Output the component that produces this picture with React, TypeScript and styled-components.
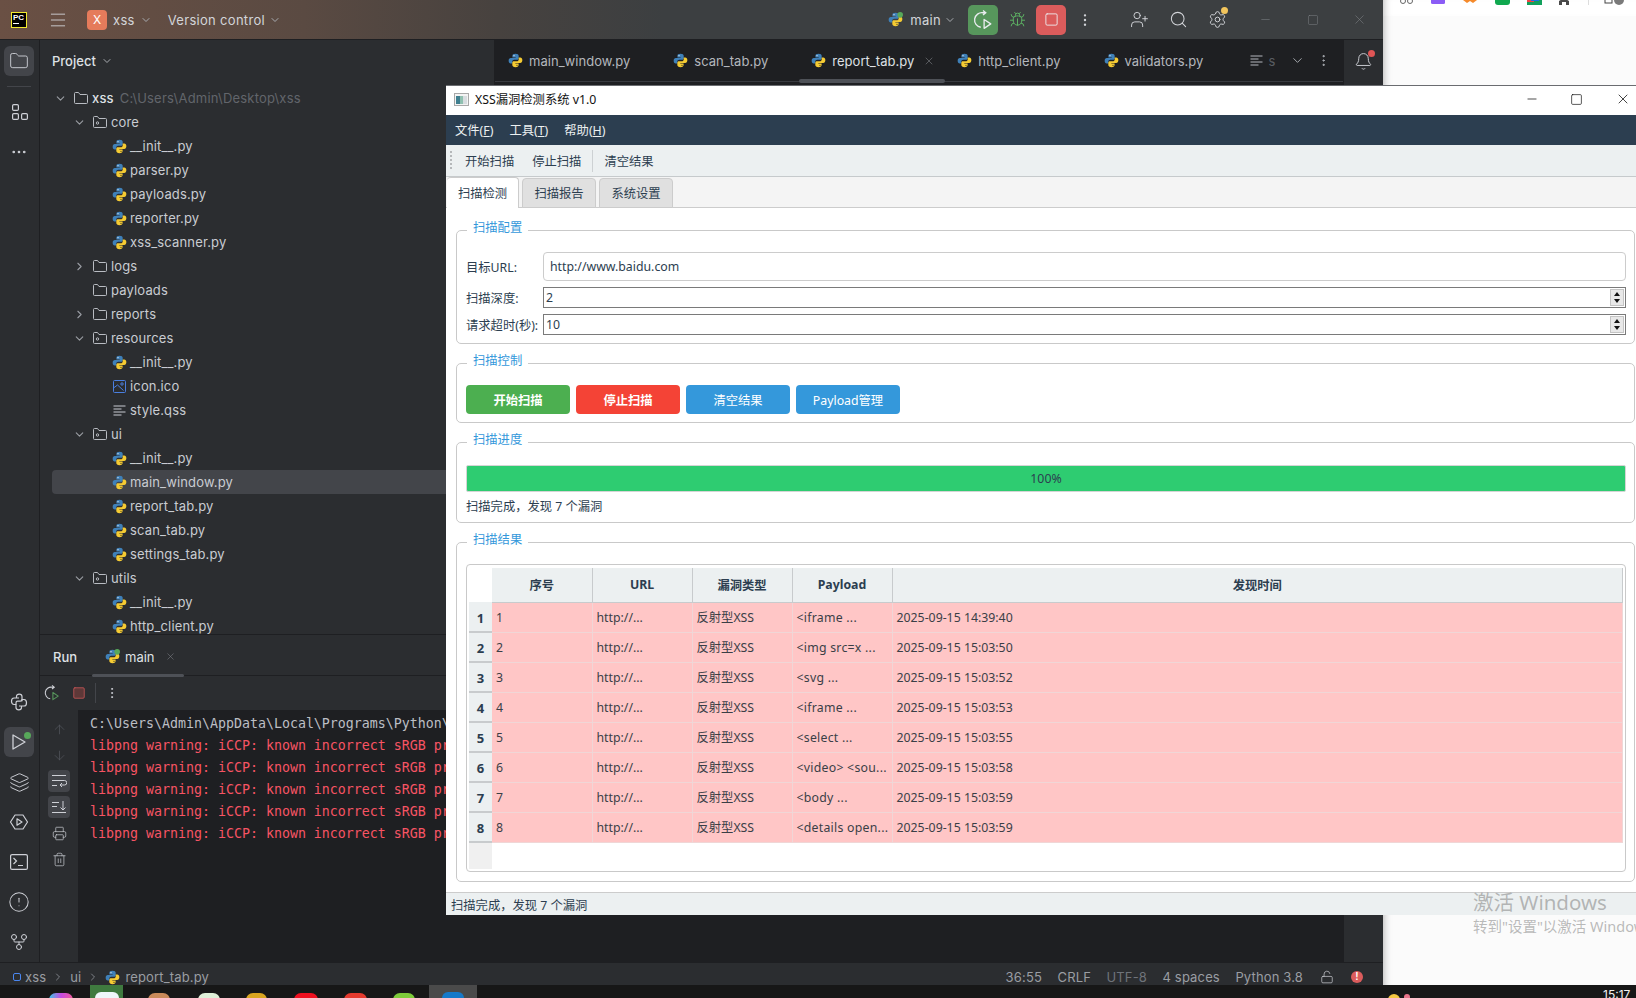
import React from 'react';
import styled, { createGlobalStyle } from 'styled-components';
import {
  ArrowDown, ArrowUp, Bell, Bug, ChevronDown, ChevronRight, CircleAlert, EllipsisVertical, Ellipsis, Folder, GitFork,
  Layers, LockOpen, Menu, Minus, Printer, Search, Settings, Square, Trash2, UserPlus, X,
} from 'lucide-react';

const Global = createGlobalStyle`
  html, body { margin: 0; padding: 0; width: 1636px; height: 998px; overflow: hidden; background: #171717; }
  * { box-sizing: border-box; }
`;

const IDE_FONT = `Inter, "Noto Sans", sans-serif`;
const QT_FONT = `"Noto Sans", "Noto Sans CJK SC", sans-serif`;

const Desktop = styled.div`
  position: relative; width: 1636px; height: 998px; display: grid; grid-template-rows: 985px 13px; overflow: hidden;
`;
const Upper = styled.div`display: flex; min-height: 0;`;
const Ide = styled.div`
  width: 1383px; flex: none; display: flex; flex-direction: column; background: #2b2d30; color: #c9ccd2;
  font: 13px ${IDE_FONT};
`;
const TitleBar = styled.header`
  height: 40px; flex: none; display: flex; align-items: center; border-bottom: 1px solid #1e1f22;
  background: linear-gradient(90deg, #6a5044 0%, #5a4a42 22%, #47423f 36%, #3c3f41 48%, #3c3f41 100%);
`;
const PcLogo = styled.div`
  width: 16px; height: 16px; margin-left: 11px; background: #000; border: 1px solid #f2ea2e; color: #fff;
  font: 700 8px/9px "Liberation Sans", sans-serif; padding-left: 1px; position: relative;
  &::after { content: ''; display: block; width: 6px; height: 1px; background: #fff; margin-top: 1px; }
`;
const HamburgerSlot = styled.div`margin-left: 21px; width: 20px; display: flex; color: #d5d7db;`;
const ProjectTile = styled.div`
  width: 20px; height: 20px; margin-left: 19px; border-radius: 4px; background: #e57b5b; color: #fff;
  display: flex; align-items: center; justify-content: center; font-size: 12px;
`;
const TitleText = styled.span<{ $ml: number }>`margin-left: ${p => p.$ml}px; color: #d3d5d9; font-size: 13px; letter-spacing: .3px; white-space: nowrap;`;
const ChevSlot = styled.span<{ $ml?: number }>`margin-left: ${p => p.$ml ?? 5}px; display: flex; color: #a8abb0;`;
const TitleRight = styled.div`margin-left: auto; display: flex; align-items: center;`;
const ActionTile = styled.div<{ $bg: string; $ml: number }>`
  width: 30px; height: 30px; margin-left: ${p => p.$ml}px; border-radius: 5px; background: ${p => p.$bg};
  color: #eef0f2; display: flex; align-items: center; justify-content: center;
`;
const TitleIcon = styled.div<{ $w: number; $ml?: number; $c?: string }>`
  width: ${p => p.$w}px; margin-left: ${p => p.$ml ?? 0}px; color: ${p => p.$c ?? '#d3d5d9'};
  display: flex; align-items: center; justify-content: center; position: relative;
`;
const Dot = styled.i<{ $c: string; $s?: number; $r?: number; $t?: number }>`
  position: absolute; width: ${p => p.$s ?? 7}px; height: ${p => p.$s ?? 7}px; border-radius: 50%; background: ${p => p.$c};
  right: ${p => p.$r ?? 0}px; top: ${p => p.$t ?? 0}px;
`;

const Main = styled.div`flex: 1; min-height: 0; display: flex;`;
const LeftStrip = styled.nav`
  width: 40px; flex: none; border-right: 1px solid #1e1f22; display: flex; flex-direction: column; align-items: center;
  padding: 6px 1px 5px 0;
`;
const StripBtn = styled.div<{ $on?: boolean }>`
  width: 30px; height: 30px; flex: none; border-radius: 6px; position: relative; color: #ced0d6;
  background: ${p => (p.$on ? '#43454a' : 'transparent')}; display: flex; align-items: center; justify-content: center;
`;
const StripRule = styled.div`width: 24px; height: 1px; background: #43454a; margin: 10px 0;`;
const StripGroup = styled.div<{ $bottom?: boolean }>`
  display: flex; flex-direction: column; gap: 10px; ${p => (p.$bottom ? 'margin-top: auto;' : '')}
`;
const Center = styled.div`flex: 1; min-width: 0; display: flex; flex-direction: column;`;
const TopSplit = styled.div`height: 595px; flex: none; display: flex; border-bottom: 1px solid #1e1f22;`;
const ProjectPanel = styled.section`width: 455px; flex: none; overflow: hidden; border-right: 1px solid #1e1f22;`;
const PanelHead = styled.div`height: 46px; padding: 0 12px 4px; display: flex; align-items: center; font-weight: 500; color: #dfe1e5;`;
const Tree = styled.div`padding-left: 12px;`;
const TreeRow = styled.div<{ $d: number; $sel?: boolean }>`
  height: 24px; display: flex; align-items: center; padding-left: ${p => p.$d * 19}px; white-space: nowrap;
  background: ${p => (p.$sel ? '#43454a' : 'transparent')}; border-radius: 4px 0 0 4px; letter-spacing: .15px; color: #c9ccd2;
`;
const Arrow = styled.span`width: 16px; flex: none; display: flex; justify-content: center; color: #9a9da3;`;
const TreeIcon = styled.span`width: 14px; margin: 0 4px 0 6px; flex: none; display: flex; align-items: center; justify-content: center;`;
const PathHint = styled.span`margin-left: 6px; color: #62656b; letter-spacing: .2px;`;
const Bold = styled.span`font-weight: 500; color: #dfe1e5;`;

const EditorArea = styled.section`flex: 1; min-width: 0; background: #1e1f22;`;
const TabStrip = styled.div`height: 42px; display: flex; align-items: center; border-bottom: 1px solid #393b40; padding-left: 1px;`;
const EdTab = styled.div<{ $on?: boolean }>`
  height: 42px; padding: 0 31px 0 12px; display: flex; align-items: center; gap: 6px; position: relative; white-space: nowrap;
  letter-spacing: .03px; color: ${p => (p.$on ? '#dfe1e5' : '#b4b7bd')};
  ${p => (p.$on ? `&::after { content: ''; position: absolute; left: 0; right: 0; bottom: -1px; height: 4px; border-radius: 2px; background: #4e5157; }` : '')}
`;
const TabClose = styled.span`position: absolute; right: 10px; display: flex; color: #7e8187;`;
const TabTools = styled.div`margin-left: auto; display: flex; align-items: center; color: #b4b7bd;`;
const TabTool = styled.span<{ $w: number }>`width: ${p => p.$w}px; display: flex; justify-content: center;`;
const DimS = styled.span`color: #5a5d63;`;
const RightStrip = styled.aside`
  width: 40px; flex: none; border-left: 1px solid #1e1f22; display: flex; justify-content: center; padding-top: 12px; position: relative; color: #ced0d6;
`;
const BellWrap = styled.div`position: relative; height: 20px; display: flex;`;

const RunPanel = styled.section`flex: 1; min-height: 0; display: flex; flex-direction: column;`;
const RunHead = styled.div`height: 41px; flex: none; display: flex; align-items: center; border-bottom: 1px solid #1e1f22; padding: 3px 0 0 13px;`;
const RunTitle = styled.span`font-weight: 500; color: #dfe1e5; width: 39px;`;
const RunTab = styled.div`
  height: 38px; width: 92px; padding-left: 13px; display: flex; align-items: center; gap: 5px; position: relative; color: #dfe1e5;
  &::after { content: ''; position: absolute; left: 0; right: 0; bottom: -1px; height: 3px; border-radius: 2px; background: #4e5157; }
`;
const RunClose = styled.span`margin-left: 5px; display: flex; color: #7e8187;`;
const RunTools = styled.div`height: 34px; flex: none; display: flex; align-items: center; padding-left: 4px; color: #ced0d6;`;
const RunTool = styled.span<{ $w: number; $c?: string; $ml?: number }>`
  width: ${p => p.$w}px; margin-left: ${p => p.$ml ?? 0}px; display: flex; justify-content: center; color: ${p => p.$c ?? 'inherit'};
`;
const RunRule = styled.span`width: 1px; height: 20px; background: #43454a; margin: 0 8px 0 5px;`;
const RunBody = styled.div`flex: 1; min-height: 0; display: flex;`;
const Gutter = styled.div`width: 38px; flex: none; display: flex; flex-direction: column; align-items: center; gap: 4px; padding-top: 8px;`;
const GutterBtn = styled.div<{ $on?: boolean; $dim?: boolean }>`
  width: 22px; height: 22px; border-radius: 4px; display: flex; align-items: center; justify-content: center;
  background: ${p => (p.$on ? '#43454a' : 'transparent')}; color: ${p => (p.$dim ? '#55585e' : '#ced0d6')};
`;
const Console = styled.pre`
  flex: 1; margin: 0; background: #1e1f22; padding: 3px 0 0 12px; overflow: hidden;
  font: 13.3px/22px "DejaVu Sans Mono", monospace; letter-spacing: -.01px; color: #bcbec4;
`;
const ConsoleLine = styled.div<{ $err?: boolean }>`
  white-space: pre; height: 22px; color: ${p => (p.$err ? '#f75464' : '#bcbec4')};
`;

const StatusBar = styled.footer`
  height: 23px; flex: none; display: flex; align-items: center; border-top: 1px solid #1e1f22; padding: 6px 20px 0 13px; color: #9a9da3; letter-spacing: .15px;
`;
const Crumb = styled.span`display: flex; align-items: center; gap: 5px;`;
const CrumbSep = styled.span<{ $mx: number }>`display: flex; margin: 0 ${p => p.$mx}px; color: #7e8187;`;
const ModuleDot = styled.i`width: 8px; height: 8px; border: 1px solid #4a86f0; border-radius: 2px; margin-right: -1px;`;
const StatusRight = styled.div`margin-left: auto; display: flex; align-items: center; gap: 15.5px;`;
const Dim = styled.span`color: #6f737a;`;
const LockSlot = styled.span`margin-left: 1px; display: flex; color: #ced0d6;`;
const ErrBadge = styled.span`
  width: 12px; height: 12px; border-radius: 50%; background: #db5c5c; color: #fff; font: 700 10px/12px "Liberation Sans", sans-serif; text-align: center; margin-left: 2px;
`;

const RightPane = styled.div`
  flex: 1; background: #fbfbfb; box-shadow: inset 8px 0 8px -8px rgba(0,0,0,.35); display: flex; flex-direction: column;
`;
const BrowserStrip = styled.div`height: 16px; background: #fff; overflow: hidden; box-shadow: inset 8px 0 8px -8px rgba(0,0,0,.35);`;

const Taskbar = styled.div`background: #171717; display: flex; padding-left: 49px; overflow: hidden;`;
const TaskIcon = styled.i<{ $w: number; $ml: number; $c: string }>`
  width: ${p => p.$w}px; height: 20px; margin: 8px 0 0 ${p => p.$ml}px; border-radius: 7px 7px 0 0; background: ${p => p.$c}; flex: none;
`;
const TaskTile = styled.div<{ $w: number; $ml: number; $c: string }>`
  width: ${p => p.$w}px; margin-left: ${p => p.$ml}px; background: ${p => p.$c}; flex: none; display: flex; justify-content: center; padding-top: 7px;
`;
const TileBlob = styled.i<{ $w: number; $c: string }>`width: ${p => p.$w}px; height: 14px; background: ${p => p.$c}; border-radius: 6px 6px 0 0;`;
const Clock = styled.span`margin-left: auto; color: #f2f2f2; font: 12px/13px ${IDE_FONT}; padding-top: 3px; width: 33px; white-space: nowrap;`;
const TrayDot = styled.i<{ $c: string; $ml: number; $w: number }>`
  width: ${p => p.$w}px; height: ${p => p.$w}px; margin: 9px 0 0 ${p => p.$ml}px; border-radius: 50%; background: ${p => p.$c}; flex: none;
`;

/* ---------- Qt window ---------- */
const QtWindow = styled.div`
  position: absolute; left: 446px; top: 85px; width: 1190px; height: 830px; background: #fff; display: flex; flex-direction: column;
  font: 12.3px ${QT_FONT}; color: #2c3e50; border-top: 1px solid #6a6c70; overflow: hidden;
`;
const QtTitle = styled.div`height: 29px; flex: none; display: flex; align-items: center; padding: 0 0 3px 8px; color: #111; white-space: nowrap;`;
const QtTitleText = styled.span`margin-left: 6px;`;
const WinBtns = styled.div`margin-left: auto; display: flex; align-items: center; color: #000;`;
const WinBtn = styled.span<{ $w: number; $ml?: number }>`width: ${p => p.$w}px; margin-left: ${p => p.$ml ?? 0}px; display: flex; justify-content: center;`;
const MenuBar = styled.div`height: 30px; flex: none; background: #2c3e50; color: #ecf0f1; display: flex; align-items: center; padding: 0 0 1px 9px; gap: 16px;`;
const ToolBar = styled.div`
  height: 32px; flex: none; background: #ecf0f1; border-bottom: 1px solid #c6cacc; display: flex; align-items: center; padding: 1px 0 0 4px; color: #2c3e50;
`;
const Grip = styled.i`width: 2px; height: 20px; margin-right: 13px; background: repeating-linear-gradient(180deg, #b5b8ba 0 2px, transparent 2px 4px);`;
const ToolItem = styled.span`margin-right: 18px; white-space: nowrap;`;
const ToolSep = styled.i`width: 1px; height: 22px; background: #cdd1d3; margin: 0 11px 0 -7px;`;
const TabBar = styled.div`height: 31px; flex: none; background: #f4f4f4; border-bottom: 1px solid #ccc; display: flex; padding-left: 1px; gap: 3px;`;
const QtTab = styled.div<{ $on?: boolean }>`
  width: ${p => (p.$on ? 72 : 74)}px; height: ${p => (p.$on ? 31 : 30)}px; margin-top: ${p => (p.$on ? 0 : 1)}px;
  background: ${p => (p.$on ? '#fff' : '#e0e0e0')}; border: 1px solid #ccc; border-bottom: ${p => (p.$on ? 'none' : '1px solid #ccc')};
  border-radius: 4px 4px 0 0; display: flex; align-items: center; justify-content: center;
  ${p => (p.$on ? 'border-left: none; position: relative; z-index: 1;' : '')}
`;
const QtBody = styled.div`flex: 1; min-height: 0; padding: 22px 1px 0 10px; display: flex; flex-direction: column; gap: 19px;`;
const Group = styled.section<{ $h: number }>`
  position: relative; height: ${p => p.$h}px; flex: none; border: 1px solid #c9c9c9; border-radius: 5px; padding: 0 8px 0 9px;
`;
const Legend = styled.span`
  position: absolute; left: 10px; top: -12px; padding: 0 6px; background: #fff; color: #3498db; line-height: 18px; white-space: nowrap;
`;
const FormGrid = styled.div`padding-top: 21px; display: grid; grid-template-columns: 77px 1fr; row-gap: 6px; align-items: center;`;
const FormLabel = styled.label`white-space: nowrap; color: #2c3e50;`;
const UrlInput = styled.div`height: 29px; border: 1px solid #ccc; border-radius: 4px; padding-left: 6px; display: flex; align-items: center;`;
const SpinBox = styled.div`height: 21px; border: 1px solid #7a7a7a; display: flex; align-items: center; padding: 0 1px 0 2px; justify-content: space-between;`;
const SpinBtns = styled.div`width: 14px; height: 17px; border: 1px solid #c4c4c4; background: #e8e8e8; display: flex; flex-direction: column; align-items: center; justify-content: space-around;`;
const TriUp = styled.i`width: 0; height: 0; border: 3px solid transparent; border-top: 0; border-bottom: 4px solid #111;`;
const TriDown = styled.i`width: 0; height: 0; border: 3px solid transparent; border-bottom: 0; border-top: 4px solid #111;`;
const BtnRow = styled.div`padding-top: 21px; display: flex; gap: 6px;`;
const QtButton = styled.button<{ $bg: string; $bold?: boolean }>`
  width: 104px; height: 29px; border: none; border-radius: 4px; background: ${p => p.$bg}; color: #fff; padding: 0;
  font: ${p => (p.$bold ? 600 : 400)} 12.3px ${QT_FONT};
`;
const ProgressTrack = styled.div`margin-top: 22px; height: 27px; border: 1px solid #d5d5d5; border-radius: 2px; background: #2ecc71; display: flex; align-items: center; justify-content: center; color: #2c3e50;`;
const ProgressNote = styled.div`margin-top: 6px; line-height: 18px; color: #2c3e50;`;
const TableFrame = styled.div`margin-top: 21px; height: 308px; border: 1px solid #c9c9c9; border-radius: 4px; padding: 3px 2px 2px 2px; display: flex; flex-direction: column;`;
const ResultTable = styled.table`border-collapse: collapse; table-layout: fixed; width: 1154px; color: #2c3e50;`;
const Th = styled.th`
  height: 34px; padding: 0; background: #ecf0f1; border-right: 1px solid #c8cbcd; border-bottom: 1px solid #c8cbcd; font-weight: 700; color: #2c3e50; font-size: 12.3px;
`;
const CornerTh = styled.th`background: #fff; padding: 0;`;
const RowHead = styled.th`
  height: 30px; padding: 2px 0 0; background: #ecf0f1; border-bottom: 2px solid #c8cbcd; font-weight: 700; font-size: 13px; color: #2c3e50; text-align: center;
`;
const Td = styled.td<{ $wide?: boolean }>`
  height: 30px; padding: 0 4px; background: #ffc6c6; border-right: 1px solid #f0d6d6; border-bottom: 1px solid #f0d6d6; white-space: nowrap; overflow: hidden; color: #3a3f46;
  letter-spacing: ${p => (p.$wide ? '.25px' : '0')};
`;
const TableFiller = styled.div`width: 23px; flex: 1; background: #f0f0f0;`;
const QtStatus = styled.div`height: 23px; flex: none; margin-top: 11px; background: #ecf0f1; border-top: 1px solid #ccc; padding: 1px 0 0 5px; display: flex; align-items: center; color: #2c3e50;`;
const Watermark = styled.div`position: absolute; left: 1473px; top: 888px; color: rgba(120,120,120,.5); font-family: ${QT_FONT}; white-space: nowrap; pointer-events: none;`;
const WmBig = styled.div`font-size: 20.5px; line-height: 28px;`;
const WmSmall = styled.div`font-size: 14.5px; line-height: 18px; margin-top: 1px;`;

/* ---------- drawn icons ---------- */
const Py = ({ s = 15, dot = false }: { s?: number; dot?: boolean }) => (
  <svg width={s} height={s} viewBox="0 0 16 16" style={{ flex: 'none' }}>
    <path fill="#3f80b8" d="M8 .8C5.5.8 4.7 1.8 4.7 3.1v1.7h3.5v.6H3C1.7 5.4.7 6.4.7 8.2s1 2.9 2.2 2.9h1.7V9.2c0-1.2.9-2 2-2h3.1c1 0 1.7-.7 1.7-1.6V3.1C11.4 1.8 10.3.8 8 .8Z" />
    <path fill="#f5cb33" transform="rotate(180 8 8)" d="M8 .8C5.5.8 4.7 1.8 4.7 3.1v1.7h3.5v.6H3C1.7 5.4.7 6.4.7 8.2s1 2.9 2.2 2.9h1.7V9.2c0-1.2.9-2 2-2h3.1c1 0 1.7-.7 1.7-1.6V3.1C11.4 1.8 10.3.8 8 .8Z" />
    <circle cx="6.4" cy="2.8" r=".7" fill="#dfe6ee" />
    <circle cx="9.6" cy="13.2" r=".7" fill="#5c5226" />
    {dot && <circle cx="13" cy="3" r="3" fill="#57a85a" />}
  </svg>
);
const ModFolder = () => (
  <svg width="14" height="14" viewBox="0 0 14 14" fill="none" stroke="#b9bcc2">
    <path d="M.5 2.5a1 1 0 0 1 1-1h3l1.5 2h6.5a1 1 0 0 1 1 1v7a1 1 0 0 1-1 1h-11a1 1 0 0 1-1-1z" />
    <circle cx="4.5" cy="8" r="1.2" />
  </svg>
);
const PlainFolder = () => (
  <svg width="14" height="14" viewBox="0 0 14 14" fill="none" stroke="#b9bcc2">
    <path d="M.5 2.5a1 1 0 0 1 1-1h3l1.5 2h6.5a1 1 0 0 1 1 1v7a1 1 0 0 1-1 1h-11a1 1 0 0 1-1-1z" />
  </svg>
);
const IcoFile = () => (
  <svg width="13" height="13" viewBox="0 0 13 13" fill="none" stroke="#4a7fe0">
    <rect x=".5" y=".5" width="12" height="12" rx="1" />
    <path d="M.5 8 4.5 5l6 5.5" /><circle cx="9" cy="4" r="1.2" />
  </svg>
);
const TextLines = ({ s = 13 }: { s?: number }) => (
  <svg width={s} height={s} viewBox="0 0 13 13" fill="none" stroke="currentColor">
    <path d="M.5 2h12M.5 5h8M.5 8h12M.5 11h8" />
  </svg>
);
const Structure = () => (
  <svg width="18" height="18" viewBox="0 0 18 18" fill="none" stroke="currentColor" strokeWidth="1.2">
    <rect x="2.6" y="1.6" width="5.8" height="5.8" rx="1.2" /><rect x="2.6" y="10.6" width="5.8" height="5.8" rx="1.2" /><rect x="11.6" y="10.6" width="5.8" height="5.8" rx="1.2" />
  </svg>
);
const PyOutline = () => (
  <svg width="18" height="18" viewBox="0 0 18 18" fill="none" stroke="currentColor" strokeWidth="1.2">
    <path d="M6.5 5V3.5C6.5 2 7.5 1.2 9.2 1.2s2.8.8 2.8 2.3v3c0 1-.8 1.7-1.7 1.7H7.6C6.6 8.2 6 9 6 10v1.5H4C2.6 11.500 1.500 10.500 1.500 8.300S2.600 5 4 5h5" />
    <path d="M11.500 13v1.500c0 1.500-1 2.300-2.700 2.300S6 16 6 14.500v-3M12 8.200V6.500h2c1.400 0 2.500 1 2.500 3.200S15.400 13 14 13H9" />
  </svg>
);
const RunPlay = () => (
  <svg width="20" height="20" viewBox="0 0 20 20" fill="none" stroke="currentColor" strokeWidth="1.3">
    <path d="M4 3v14l12-7z" strokeLinejoin="round" />
  </svg>
);
const Services = () => (
  <svg width="20" height="20" viewBox="0 0 20 20" fill="none" stroke="currentColor" strokeWidth="1.2">
    <path d="M6 3h8l4.500 7-4.500 7H6l-4.500-7z" strokeLinejoin="round" /><path d="M8 6.800v6.400l5-3.200z" strokeLinejoin="round" />
  </svg>
);
const Term = () => (
  <svg width="18" height="18" viewBox="0 0 18 18" fill="none" stroke="currentColor" strokeWidth="1.2">
    <rect x=".6" y="1.600" width="16.800" height="14.800" rx="1.500" /><path d="m3.500 5 3 3-3 3M8 12.500h5" />
  </svg>
);
const Rerun = ({ c = '#e9ecef', play = '#e9ecef', s = 20 }: { c?: string; play?: string; s?: number }) => (
  <svg width={s} height={s} viewBox="0 0 18 18" fill="none" strokeWidth="1.2">
    <path stroke={c} d="M7 15.500A6.500 6.500 0 0 1 9 2.500h2M9 .5l2.500 2-2.500 2" />
    <path stroke={play} d="M10 8.500v8l6-4z" strokeLinejoin="round" />
  </svg>
);
const SoftWrap = () => (
  <svg width="16" height="16" viewBox="0 0 16 16" fill="none" stroke="currentColor"><path d="M1 2.500h14M1 7.500h12.500a1.800 1.800 0 0 1 0 4.500H9m2-2-2 2 2 2M1 12.500h5" /></svg>
);
const ScrollEnd = () => (
  <svg width="16" height="16" viewBox="0 0 16 16" fill="none" stroke="currentColor"><path d="M1 3.500h7M1 7.500h5M1 13.500h14M12 2v9m-2.500-2.500 2.500 2.500 2.500-2.500" /></svg>
);
const BrowserTops = () => (
  <svg width="253" height="6" viewBox="0 0 253 6" style={{ display: 'block' }}>
    <circle cx="20" cy="1" r="2.500" fill="none" stroke="#666" /><circle cx="27" cy="1" r="2.500" fill="none" stroke="#666" />
    <rect x="48" y="-3" width="14" height="7" rx="1.500" fill="#8b5cf6" />
    <path d="M80 -1h14v1l-4 3-3-2-3 2-4-3z" fill="#f58a2b" />
    <rect x="112" y="-3" width="15" height="8" rx="3" fill="#10a84f" />
    <rect x="144" y="-2" width="15" height="7" fill="#12a05c" /><rect x="144" y="-2" width="7" height="4" fill="#e44" /><rect x="148" y="-2" width="8" height="3" fill="#1b6fe0" />
    <path d="M176 5V1l5-3 5 3v4h-3V2h-4v3z" fill="#4a4a4a" />
    <rect x="205" y="-2" width="1" height="7" fill="#ddd" />
    <circle cx="236" cy="0" r="5" fill="#7a7a7a" /><rect x="222" y="-2" width="7" height="5" fill="none" stroke="#444" />
  </svg>
);

const files: { d: number; t: string; k: string; open?: boolean; hint?: string; sel?: boolean }[] = [
  { d: 0, t: 'xss', k: 'root', open: true, hint: 'C:\\Users\\Admin\\Desktop\\xss' },
  { d: 1, t: 'core', k: 'mod', open: true },
  { d: 2, t: '__init__.py', k: 'py' }, { d: 2, t: 'parser.py', k: 'py' }, { d: 2, t: 'payloads.py', k: 'py' },
  { d: 2, t: 'reporter.py', k: 'py' }, { d: 2, t: 'xss_scanner.py', k: 'py' },
  { d: 1, t: 'logs', k: 'dir', open: false }, { d: 1, t: 'payloads', k: 'dir' }, { d: 1, t: 'reports', k: 'dir', open: false },
  { d: 1, t: 'resources', k: 'mod', open: true },
  { d: 2, t: '__init__.py', k: 'py' }, { d: 2, t: 'icon.ico', k: 'ico' }, { d: 2, t: 'style.qss', k: 'txt' },
  { d: 1, t: 'ui', k: 'mod', open: true },
  { d: 2, t: '__init__.py', k: 'py' }, { d: 2, t: 'main_window.py', k: 'py', sel: true }, { d: 2, t: 'report_tab.py', k: 'py' },
  { d: 2, t: 'scan_tab.py', k: 'py' }, { d: 2, t: 'settings_tab.py', k: 'py' },
  { d: 1, t: 'utils', k: 'mod', open: true },
  { d: 2, t: '__init__.py', k: 'py' }, { d: 2, t: 'http_client.py', k: 'py' },
];

const rows = [
  ['<iframe ...', '2025-09-15 14:39:40'],
  ['<img src=x ...', '2025-09-15 15:03:50'],
  ['<svg ...', '2025-09-15 15:03:52'],
  ['<iframe ...', '2025-09-15 15:03:53'],
  ['<select ...', '2025-09-15 15:03:55'],
  ['<video> <sou...', '2025-09-15 15:03:58'],
  ['<body ...', '2025-09-15 15:03:59'],
  ['<details open...', '2025-09-15 15:03:59'],
];

const kindIcon = (k: string) => {
  if (k === 'py') return <Py />;
  if (k === 'ico') return <IcoFile />;
  if (k === 'txt') return <TextLines />;
  if (k === 'mod') return <ModFolder />;
  return <PlainFolder />;
};

const Mnemonic = ({ t, k }: { t: string; k: string }) => <span>{t}(<u>{k}</u>)</span>;

export default function App() {
  return (
    <Desktop>
      <Global />
      <Upper>
        <Ide>
          <TitleBar>
            <PcLogo>PC</PcLogo>
            <HamburgerSlot><Menu size={20} strokeWidth={1.05} /></HamburgerSlot>
            <ProjectTile>X</ProjectTile>
            <TitleText $ml={6}>xss</TitleText>
            <ChevSlot $ml={5}><ChevronDown size={12} /></ChevSlot>
            <TitleText $ml={16}>Version control</TitleText>
            <ChevSlot $ml={4}><ChevronDown size={12} /></ChevSlot>
            <TitleRight>
              <Py dot />
              <TitleText $ml={7}>main</TitleText>
              <ChevSlot $ml={3}><ChevronDown size={12} /></ChevSlot>
              <ActionTile $bg="#57965c" $ml={12}><Rerun /></ActionTile>
              <TitleIcon $w={28} $ml={5} $c="#5fb865"><Bug size={17} strokeWidth={1.3} /></TitleIcon>
              <ActionTile $bg="#db5c5c" $ml={5}><Square size={15} strokeWidth={1.4} /></ActionTile>
              <TitleIcon $w={28} $ml={5}><EllipsisVertical size={16} strokeWidth={1.6} /></TitleIcon>
              <TitleIcon $w={40} $ml={20}><UserPlus size={19} strokeWidth={1.2} /></TitleIcon>
              <TitleIcon $w={38}><Search size={19} strokeWidth={1.3} /></TitleIcon>
              <TitleIcon $w={40}><Settings size={19} strokeWidth={1.2} /><Dot $c="#f2c55c" $s={7} $r={9} $t={-3} /></TitleIcon>
              <TitleIcon $w={47} $ml={5} $c="#7f8286"><Minus size={13} strokeWidth={1} /></TitleIcon>
              <TitleIcon $w={47} $c="#7f8286"><Square size={12} strokeWidth={1} /></TitleIcon>
              <TitleIcon $w={47} $c="#7f8286"><X size={15} strokeWidth={.9} /></TitleIcon>
            </TitleRight>
          </TitleBar>
          <Main>
            <LeftStrip>
              <StripBtn $on><Folder size={20} strokeWidth={1.1} /></StripBtn>
              <StripRule />
              <StripGroup>
                <StripBtn><Structure /></StripBtn>
                <StripBtn><Ellipsis size={18} strokeWidth={1.6} /></StripBtn>
              </StripGroup>
              <StripGroup $bottom>
                <StripBtn><PyOutline /></StripBtn>
                <StripBtn $on><RunPlay /><Dot $c="#57a85a" $s={7} $r={3} $t={5} /></StripBtn>
                <StripBtn><Layers size={21} strokeWidth={1.1} /></StripBtn>
                <StripBtn><Services /></StripBtn>
                <StripBtn><Term /></StripBtn>
                <StripBtn><CircleAlert size={22} strokeWidth={1.1} /></StripBtn>
                <StripBtn><GitFork size={20} strokeWidth={1.2} /></StripBtn>
              </StripGroup>
            </LeftStrip>
            <Center>
              <TopSplit>
                <ProjectPanel>
                  <PanelHead>Project<ChevSlot><ChevronDown size={12} /></ChevSlot></PanelHead>
                  <Tree>
                    {files.map((f, i) => (
                      <TreeRow key={i} $d={f.d} $sel={f.sel}>
                        <Arrow>
                          {f.open === true && <ChevronDown size={13} />}
                          {f.open === false && <ChevronRight size={13} />}
                        </Arrow>
                        <TreeIcon>{kindIcon(f.k)}</TreeIcon>
                        {f.k === 'root' ? <Bold>{f.t}</Bold> : f.t}
                        {f.hint && <PathHint>{f.hint}</PathHint>}
                      </TreeRow>
                    ))}
                  </Tree>
                </ProjectPanel>
                <EditorArea>
                  <TabStrip>
                    <EdTab><Py />main_window.py</EdTab>
                    <EdTab><Py />scan_tab.py</EdTab>
                    <EdTab $on><Py />report_tab.py<TabClose><X size={12} strokeWidth={1.2} /></TabClose></EdTab>
                    <EdTab><Py />http_client.py</EdTab>
                    <EdTab><Py />validators.py</EdTab>
                    <TabTools>
                      <TabTool $w={16}><TextLines /></TabTool>
                      <TabTool $w={16}><DimS>s</DimS></TabTool>
                      <TabTool $w={34}><ChevronDown size={15} strokeWidth={1.4} /></TabTool>
                      <TabTool $w={18}><EllipsisVertical size={15} strokeWidth={1.6} /></TabTool>
                      <TabTool $w={11} />
                    </TabTools>
                  </TabStrip>
                </EditorArea>
              </TopSplit>
              <RunPanel>
                <RunHead>
                  <RunTitle>Run</RunTitle>
                  <RunTab><Py dot />main<RunClose><X size={11} strokeWidth={1.2} /></RunClose></RunTab>
                </RunHead>
                <RunTools>
                  <RunTool $w={16}><Rerun c="#ced0d6" play="#57965c" s={16} /></RunTool>
                  <RunTool $w={22} $ml={8} $c="#db5c5c"><Square size={14} strokeWidth={1.2} fill="#5e3838" /></RunTool>
                  <RunRule />
                  <RunTool $w={16}><EllipsisVertical size={14} strokeWidth={1.6} /></RunTool>
                </RunTools>
                <RunBody>
                  <Gutter>
                    <GutterBtn $dim><ArrowUp size={15} strokeWidth={1.1} /></GutterBtn>
                    <GutterBtn $dim><ArrowDown size={15} strokeWidth={1.1} /></GutterBtn>
                    <GutterBtn $on><SoftWrap /></GutterBtn>
                    <GutterBtn $on><ScrollEnd /></GutterBtn>
                    <GutterBtn><Printer size={15} strokeWidth={1.1} /></GutterBtn>
                    <GutterBtn><Trash2 size={15} strokeWidth={1.1} /></GutterBtn>
                  </Gutter>
                  <Console>
                    <ConsoleLine>{'C:\\Users\\Admin\\AppData\\Local\\Programs\\Python\\'}</ConsoleLine>
                    {[0, 1, 2, 3, 4].map(i => (
                      <ConsoleLine $err key={i}>libpng warning: iCCP: known incorrect sRGB pr</ConsoleLine>
                    ))}
                  </Console>
                </RunBody>
              </RunPanel>
            </Center>
            <RightStrip>
              <BellWrap><Bell size={19} strokeWidth={1.2} /><Dot $c="#e05555" $s={7} $r={-2} $t={-2} /></BellWrap>
            </RightStrip>
          </Main>
          <StatusBar>
            <Crumb><ModuleDot />xss</Crumb>
            <CrumbSep $mx={6}><ChevronRight size={12} /></CrumbSep>
            ui
            <CrumbSep $mx={6}><ChevronRight size={12} /></CrumbSep>
            <Crumb><Py />report_tab.py</Crumb>
            <StatusRight>
              <span>36:55</span>
              <span>CRLF</span>
              <Dim>UTF-8</Dim>
              <span>4 spaces</span>
              <span>Python 3.8</span>
              <LockSlot><LockOpen size={14} strokeWidth={1.2} /></LockSlot>
              <ErrBadge>!</ErrBadge>
            </StatusRight>
          </StatusBar>
        </Ide>
        <RightPane>
          <BrowserStrip><BrowserTops /></BrowserStrip>
        </RightPane>
      </Upper>
      <Taskbar>
        <TaskIcon $w={24} $ml={0} $c="linear-gradient(90deg,#3ac6e8,#c44be0,#f05a9a)" />
        <TaskTile $w={33} $ml={17} $c="#3f7a3f"><TileBlob $w={24} $c="#eef7fa" /></TaskTile>
        <TaskIcon $w={22} $ml={25} $c="#c98a5a" />
        <TaskIcon $w={22} $ml={28} $c="#dff0d8" />
        <TaskIcon $w={21} $ml={26} $c="#d9a520" />
        <TaskIcon $w={24} $ml={27} $c="#f01020" />
        <TaskIcon $w={23} $ml={26} $c="#e53a2e" />
        <TaskIcon $w={22} $ml={26} $c="#7ecb3a" />
        <TaskTile $w={48} $ml={14} $c="#4a4a4a"><TileBlob $w={22} $c="#1679c9" /></TaskTile>
        <TrayDot $c="#f5c842" $ml={911} $w={12} />
        <TrayDot $c="#e8748a" $ml={4} $w={6} />
        <Clock>15:17</Clock>
      </Taskbar>

      <QtWindow>
        <QtTitle>
          <svg width="15" height="13" viewBox="0 0 15 13">
            <rect x=".5" y=".5" width="14" height="12" fill="#f4f4f4" stroke="#a8a8a8" />
            <rect x="2" y="3" width="4" height="8" fill="#3f7f8f" /><rect x="6" y="3" width="3" height="8" fill="#8fc0b0" /><rect x="9" y="3" width="4" height="8" fill="#d8dde0" />
          </svg>
          <QtTitleText>XSS漏洞检测系统 v1.0</QtTitleText>
          <WinBtns>
            <WinBtn $w={45}><Minus size={14} strokeWidth={1.2} /></WinBtn>
            <WinBtn $w={45}><Square size={13} strokeWidth={1.2} /></WinBtn>
            <WinBtn $w={26} $ml={11}><X size={16} strokeWidth={1.1} /></WinBtn>
          </WinBtns>
        </QtTitle>
        <MenuBar>
          <Mnemonic t="文件" k="F" />
          <Mnemonic t="工具" k="T" />
          <Mnemonic t="帮助" k="H" />
        </MenuBar>
        <ToolBar>
          <Grip />
          <ToolItem>开始扫描</ToolItem>
          <ToolItem>停止扫描</ToolItem>
          <ToolSep />
          <ToolItem>清空结果</ToolItem>
        </ToolBar>
        <TabBar>
          <QtTab $on>扫描检测</QtTab>
          <QtTab>扫描报告</QtTab>
          <QtTab>系统设置</QtTab>
        </TabBar>
        <QtBody>
          <Group $h={114}>
            <Legend>扫描配置</Legend>
            <FormGrid>
              <FormLabel>目标URL:</FormLabel>
              <UrlInput>http://www.baidu.com</UrlInput>
              <FormLabel>扫描深度:</FormLabel>
              <SpinBox>2<SpinBtns><TriUp /><TriDown /></SpinBtns></SpinBox>
              <FormLabel>请求超时(秒):</FormLabel>
              <SpinBox>10<SpinBtns><TriUp /><TriDown /></SpinBtns></SpinBox>
            </FormGrid>
          </Group>
          <Group $h={60}>
            <Legend>扫描控制</Legend>
            <BtnRow>
              <QtButton $bg="#4caf50" $bold>开始扫描</QtButton>
              <QtButton $bg="#f44336" $bold>停止扫描</QtButton>
              <QtButton $bg="#3498db">清空结果</QtButton>
              <QtButton $bg="#3498db">Payload管理</QtButton>
            </BtnRow>
          </Group>
          <Group $h={81}>
            <Legend>扫描进度</Legend>
            <ProgressTrack>100%</ProgressTrack>
            <ProgressNote>扫描完成，发现 7 个漏洞</ProgressNote>
          </Group>
          <Group $h={340}>
            <Legend>扫描结果</Legend>
            <TableFrame>
              <ResultTable>
                <colgroup>
                  <col style={{ width: 23 }} /><col style={{ width: 100 }} /><col style={{ width: 100 }} /><col style={{ width: 100 }} /><col style={{ width: 100 }} /><col />
                </colgroup>
                <thead>
                  <tr>
                    <CornerTh />
                    <Th>序号</Th><Th>URL</Th><Th>漏洞类型</Th><Th>Payload</Th><Th>发现时间</Th>
                  </tr>
                </thead>
                <tbody>
                  {rows.map((r, i) => (
                    <tr key={i}>
                      <RowHead>{i + 1}</RowHead>
                      <Td>{i + 1}</Td>
                      <Td>http://...</Td>
                      <Td>反射型XSS</Td>
                      <Td $wide>{r[0]}</Td>
                      <Td>{r[1]}</Td>
                    </tr>
                  ))}
                </tbody>
              </ResultTable>
              <TableFiller />
            </TableFrame>
          </Group>
        </QtBody>
        <QtStatus>扫描完成，发现 7 个漏洞</QtStatus>
      </QtWindow>
      <Watermark>
        <WmBig>激活 Windows</WmBig>
        <WmSmall>转到"设置"以激活 Windows</WmSmall>
      </Watermark>
    </Desktop>
  );
}
